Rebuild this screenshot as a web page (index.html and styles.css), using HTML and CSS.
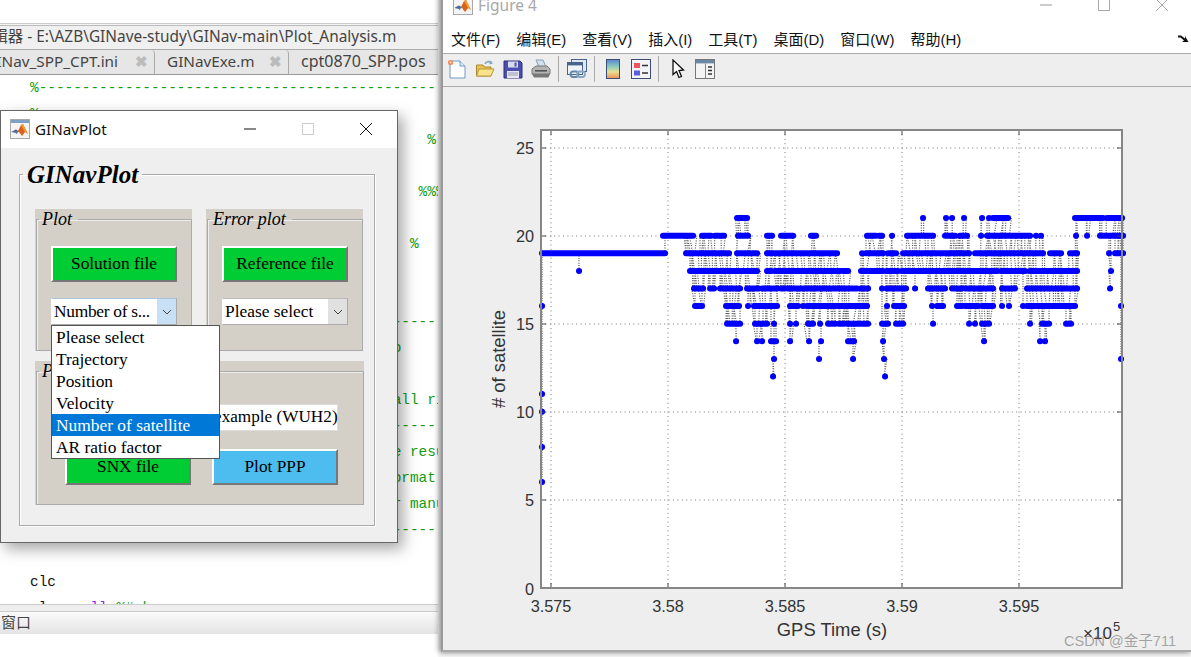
FILE: index.html
```html
<!DOCTYPE html>
<html lang="en">
<head>
  <meta charset="UTF-8">
  <title>GINavPlot</title>
  <link rel="stylesheet" href="styles.css">
</head>
<body>

  <svg class="defs" width="0" height="0">
    <symbol id="matlab" viewBox="0 0 20 20">
      <rect x="0.5" y="0.5" width="19" height="19" fill="#f4f4f4" stroke="#a8a8a8"/>
      <rect x="1" y="1" width="18" height="3" fill="#7f9fc4"/>
      <path d="M1.5 13 L6 10.5 L8 12 L11 6 L13 5 L18 15 L15 13 L12 17 L9 13 L5 13.5 Z" fill="#d9631e"/>
      <path d="M1.5 13 L6 10.5 L8 12 L7 15 L5 13.5 Z" fill="#3b6fb5"/>
      <path d="M11 6 L13 5 L18 15 L15 13 Z" fill="#f0a030"/>
    </symbol>
  </svg>

  <!-- Editor behind everything -->
  <div class="editor">
    <div class="editor-top"></div>
    <div class="editor-title"><span class="editor-path">编辑器 - E:\AZB\GINave-study\GINav-main\Plot_Analysis.m</span></div>
    <div class="tabs">
      <div class="tab tab-first"><span>GINav_SPP_CPT.ini</span><b class="tab-x">✖</b></div>
      <div class="tab"><span>GINavExe.m</span><b class="tab-x">✖</b></div>
      <div class="tab tab-last"><span>cpt0870_SPP.pos</span></div>
    </div>
    <div class="code">
      <div>%---------------------------------------------------------</div>
      <div>%</div>
      <div>                                              %</div>
      <div> </div>
      <div>                                             %%%%</div>
      <div> </div>
      <div>                                            %</div>
      <div> </div>
      <div> </div>
      <div>%---------------------------------------------------------</div>
      <div>                                          o</div>
      <div> </div>
      <div>                                          all rights</div>
      <div>%---------------------------------------------------------</div>
      <div>                                          e results</div>
      <div>                                         format</div>
      <div>                                          r manual</div>
      <div>%---------------------------------------------------------</div>
      <div> </div>
      <div class="code-black">clc</div>
      <div class="code-black">clear <span class="code-purple">all</span> <span class="code-green">%#ok</span></div>
    </div>
    <div class="cmd-gap"></div>
    <div class="cmd-title">窗口</div>
  </div>

  <!-- GINavPlot dialog -->
  <div class="dialog">
    <div class="titlebar">
      <svg class="app-icon"><use href="#matlab"/></svg>
      <span class="titlebar-text">GINavPlot</span>
      <svg class="win-btn" viewBox="0 0 12 12"><path d="M0 6H12" stroke="#111"/></svg>
      <svg class="win-btn" viewBox="0 0 12 12"><rect x="0.5" y="0.5" width="11" height="11" fill="none" stroke="#ccc"/></svg>
      <svg class="win-btn" viewBox="0 0 12 12"><path d="M0 0L12 12M12 0L0 12" stroke="#111"/></svg>
    </div>
    <div class="dialog-body">
      <fieldset class="main-panel">
        <legend>GINavPlot</legend>
        <div class="panel-row">
          <div class="box">
            <fieldset class="sub-panel">
              <legend>Plot</legend>
              <button class="btn btn-green">Solution file</button>
              <div class="select select-active"><span>Number of s...</span><i class="select-arrow"><svg viewBox="0 0 10 6"><path d="M1 1L5 5L9 1" fill="none" stroke="#444"/></svg></i></div>
            </fieldset>
          </div>
          <div class="box">
            <fieldset class="sub-panel">
              <legend>Error plot</legend>
              <button class="btn btn-green">Reference file</button>
              <div class="select"><span>Please select</span><i class="select-arrow"><svg viewBox="0 0 10 6"><path d="M1 1L5 5L9 1" fill="none" stroke="#444"/></svg></i></div>
            </fieldset>
          </div>
        </div>
        <div class="box box-wide">
          <fieldset class="sub-panel ppp-panel">
            <legend>PPP plot</legend>
            <div class="ppp-field">example (WUH2)</div>
            <div class="ppp-buttons">
              <button class="btn btn-green">SNX file</button>
              <button class="btn btn-blue">Plot PPP</button>
            </div>
          </fieldset>
        </div>
      </fieldset>
    </div>
    <ul class="dropdown">
      <li>Please select</li>
      <li>Trajectory</li>
      <li>Position</li>
      <li>Velocity</li>
      <li class="selected">Number of satellite</li>
      <li>AR ratio factor</li>
    </ul>
  </div>

  <!-- Figure window -->
  <div class="figure">
    <div class="fig-title">
      <svg class="fig-icon"><use href="#matlab"/></svg>
      <span class="fig-title-text">Figure 4</span>
      <svg class="win-btn" viewBox="0 0 12 12"><path d="M0 6H12" stroke="#999"/></svg>
      <svg class="win-btn" viewBox="0 0 12 12"><rect x="0.5" y="0.5" width="11" height="11" fill="none" stroke="#aaa"/></svg>
      <svg class="win-btn" viewBox="0 0 12 12"><path d="M0 0L12 12M12 0L0 12" stroke="#aaa"/></svg>
    </div>
    <div class="menu">
      <span>文件(F)</span><span>编辑(E)</span><span>查看(V)</span><span>插入(I)</span><span>工具(T)</span><span>桌面(D)</span><span>窗口(W)</span><span>帮助(H)</span>
      <svg class="menu-dock" viewBox="0 0 11 9"><path d="M0 1.5H3L7 4.5V2L10.5 8H4L6 6.5L2.5 3.5H0Z" fill="#111"/></svg>
    </div>
    <div class="toolbar">
      <!-- new -->
      <svg class="tb-icon" viewBox="0 0 20 20">
        <path d="M3 2H13L18 7V19H3Z" fill="#fff" stroke="#6f9ac4"/>
        <path d="M13 2V7H18" fill="#dcebf7" stroke="#6f9ac4"/>
        <circle cx="3.5" cy="3.5" r="2.6" fill="#f08a5a"/>
        <circle cx="3.5" cy="3.5" r="1" fill="#fde0c0"/>
      </svg>
      <!-- open -->
      <svg class="tb-icon" viewBox="0 0 20 20">
        <path d="M1.5 6H8L9.5 8H16V17H1.5Z" fill="#e8c250" stroke="#a88a30"/>
        <path d="M1.5 17L4 10H19L16 17Z" fill="#f9e28a" stroke="#b89a3a"/>
        <path d="M10 5C11 2.5 14 2 16.5 3.5" fill="none" stroke="#7fa6c8" stroke-width="1.6"/>
        <path d="M15 1.5L18 4.5L14.5 5.5Z" fill="#7fa6c8"/>
      </svg>
      <!-- save -->
      <svg class="tb-icon" viewBox="0 0 20 20">
        <path d="M1 2H17L19 4V19H1Z" fill="#4a4fb0" stroke="#2c2f78"/>
        <rect x="5" y="2.5" width="10" height="6" fill="#d8dcf0"/>
        <rect x="11.5" y="3.5" width="2" height="4" fill="#4a4fb0"/>
        <rect x="4" y="12" width="12" height="7" fill="#e8e8f0"/>
        <path d="M5 14H15M5 16H15" stroke="#9a9ab8"/>
      </svg>
      <!-- print -->
      <svg class="tb-icon" viewBox="0 0 20 20">
        <path d="M5 1H12L15 8H8Z" fill="#cfe0ee" stroke="#8aa0b0"/>
        <path d="M1 10L5 7H16L19 10V15H1Z" fill="#b4b4b4" stroke="#777"/>
        <path d="M1 15H19L17.5 18.5H3Z" fill="#777"/>
        <rect x="4" y="11" width="12" height="1.6" fill="#555"/>
      </svg>
      <span class="tb-sep"></span>
      <!-- link plot -->
      <svg class="tb-icon" viewBox="0 0 20 20">
        <rect x="4.5" y="0.5" width="15" height="12" fill="#dfe8f2" stroke="#46648c"/>
        <rect x="0.5" y="3.5" width="15" height="12" fill="#eef3f8" stroke="#46648c"/>
        <rect x="1" y="4" width="14" height="2.4" fill="#46648c"/>
        <rect x="3.5" y="12.5" width="8" height="5.5" rx="2.7" fill="none" stroke="#5f86ad" stroke-width="1.8"/>
        <rect x="10" y="12.5" width="8" height="5.5" rx="2.7" fill="none" stroke="#8aa8c4" stroke-width="1.8"/>
      </svg>
      <span class="tb-sep"></span>
      <!-- colorbar -->
      <svg class="tb-icon" viewBox="0 0 20 20">
        <defs>
          <linearGradient id="cbar" x1="0" y1="0" x2="0" y2="1">
            <stop offset="0" stop-color="#5a86d0"/>
            <stop offset="0.35" stop-color="#86c8c0"/>
            <stop offset="0.65" stop-color="#e8e090"/>
            <stop offset="1" stop-color="#e8905a"/>
          </linearGradient>
        </defs>
        <rect x="3.5" y="0.5" width="13" height="19" fill="url(#cbar)" stroke="#3c4c74"/>
      </svg>
      <!-- legend -->
      <svg class="tb-icon" viewBox="0 0 20 20">
        <rect x="0.5" y="0.5" width="19" height="19" fill="#f4f4f8" stroke="#3c4c74"/>
        <rect x="3" y="4" width="6" height="5" fill="#ee5560"/>
        <rect x="3" y="11.5" width="6" height="5" fill="#5560e0"/>
        <path d="M11 6.5H17M11 14H17" stroke="#333" stroke-width="1.4"/>
      </svg>
      <span class="tb-sep"></span>
      <!-- pointer -->
      <svg class="tb-icon" viewBox="0 0 20 20">
        <path d="M6 1V15.5L9.5 12.5L12 18.5L14.5 17.5L12 11.5L16.5 11Z" fill="#fff" stroke="#111" stroke-width="1.3"/>
      </svg>
      <!-- dock panel -->
      <svg class="tb-icon" viewBox="0 0 20 20">
        <rect x="0.5" y="0.5" width="19" height="19" fill="#f4f4f4" stroke="#777"/>
        <rect x="1" y="1" width="18" height="3.4" fill="#6b87a4"/>
        <path d="M10.5 4.5V19" stroke="#888"/>
        <path d="M13 8H17M13 11.5H17M13 15H17" stroke="#333" stroke-width="1.6"/>
      </svg>
    </div>
    <svg id="plot" class="plot" viewBox="443 87 748 563">
      <rect x="541" y="130" width="581" height="458" fill="#fff"/>
      <path class="grid" d="M551 130V588M668 130V588M785 130V588M902 130V588M1019 130V588"/>
      <path class="grid" d="M541 148H1122M541 236H1122M541 324H1122M541 412H1122M541 500H1122"/>
      <g id="series"></g>
      <path class="ticks" d="M551 588V583M668 588V583M785 588V583M902 588V583M1019 588V583M551 130V135M668 130V135M785 130V135M902 130V135M1019 130V135"/>
      <path class="ticks" d="M541 148H546M541 236H546M541 324H546M541 412H546M541 500H546M1122 148H1117M1122 236H1117M1122 324H1117M1122 412H1117M1122 500H1117"/>
      <rect class="axes" x="541" y="130" width="581" height="458"/>

      <g class="tick-y">
        <text x="534" y="154">25</text>
        <text x="534" y="242">20</text>
        <text x="534" y="330">15</text>
        <text x="534" y="418">10</text>
        <text x="534" y="506">5</text>
        <text x="534" y="595">0</text>
      </g>
      <g class="tick-x">
        <text x="551" y="612">3.575</text>
        <text x="668" y="612">3.58</text>
        <text x="785" y="612">3.585</text>
        <text x="902" y="612">3.59</text>
        <text x="1019" y="612">3.595</text>
      </g>
      <text class="axis-label" x="832" y="636">GPS Time (s)</text>
      <text class="axis-label" transform="translate(505 359) rotate(-90)"># of satellite</text>
      <text class="exponent" x="1083" y="639">×10</text>
      <text class="exponent-sup" x="1113" y="631">5</text>
    </svg>
  </div>

  <div class="watermark">CSDN @金子711</div>

  <script src="plot.js"></script>
</body>
</html>
```

FILE: styles.css
```css
* {
  box-sizing: border-box;
}
html, body {
  margin: 0;
  padding: 0;
}
body {
  position: relative;
  width: 1191px;
  height: 657px;
  overflow: hidden;
  background-color: #f6f6f6;
  font-family: "Liberation Sans", "Noto Sans CJK SC", sans-serif;
}
.defs {
  position: absolute;
}

/* editor */
.editor {
  width: 438px;
  height: 657px;
  background-color: #fff;
  overflow: hidden;
  display: flex;
  flex-direction: column;
  font-family: "Noto Sans", "Noto Sans CJK SC", sans-serif;
}
.editor-top {
  height: 26px;
  flex: none;
  border-bottom: 1px solid #bbb;
  background: linear-gradient(#fff 23px, #ccc 23px, #ccc 24px, #f4f4f4 24px);
}
.editor-title {
  height: 24px;
  flex: none;
  background-color: #f0f0f0;
  border-bottom: 1px solid #aaa;
  font-size: 15.4px;
  line-height: 22px;
  color: #444;
  white-space: nowrap;
}
.editor-path {
  margin-left: -23px;
}
.tabs {
  height: 25px;
  flex: none;
  display: flex;
  background-color: #e6e6e6;
  border-bottom: 1px solid #999;
  overflow: hidden;
}
.tab {
  width: 134px;
  flex: none;
  display: flex;
  justify-content: space-between;
  align-items: center;
  padding: 0 6px 2px 12px;
  font-size: 15.3px;
  color: #444;
  border-right: 1px solid #aaa;
  border-top-right-radius: 4px;
}
.tab-first {
  width: 156px;
  margin-left: -1px;
  padding-left: 0;
  justify-content: flex-end;
  gap: 17px;
}
.tab-first span {
  flex: none;
}
.tab-last {
  width: 150px;
  border-right: none;
  font-size: 16px;
}
.tab-x {
  color: #bbb;
  font-size: 15px;
  font-weight: bold;
}
.code {
  height: 529px;
  flex: none;
  overflow: hidden;
  padding-left: 30px;
  font-family: "Liberation Mono", monospace;
  font-size: 14.4px;
  line-height: 26px;
  color: #139c13;
}
.code div {
  height: 26px;
  white-space: pre;
}
.code .code-black {
  color: #111;
}
.code-purple {
  color: #a020f0;
}
.code-green {
  color: #139c13;
}
.cmd-gap {
  height: 7px;
  flex: none;
  background-color: #eee;
  border-top: 1px solid #ccc;
}
.cmd-title {
  height: 23px;
  flex: none;
  border-top: 1px solid #ccc;
  background: linear-gradient(#fafafa, #e4e4e4);
  font-size: 15px;
  line-height: 21px;
  color: #444;
  padding-left: 1px;
}

/* dialog */
.dialog {
  position: absolute;
  left: 0;
  top: 110px;
  width: 398px;
  height: 433px;
  border: 1px solid #666;
  background-color: #efefef;
  box-shadow: 5px 6px 14px rgba(0, 0, 0, 0.35);
  font-family: "Liberation Serif", serif;
}
.titlebar {
  height: 37px;
  padding-bottom: 2px;
  background-color: #fff;
  display: flex;
  align-items: center;
  font-family: "Noto Sans", sans-serif;
  font-size: 15.2px;
  color: #111;
}
.app-icon {
  width: 20px;
  height: 20px;
  margin-left: 9px;
  flex: none;
}
.titlebar-text {
  margin-left: 5px;
  width: 209px;
  flex: none;
}
.win-btn {
  width: 12px;
  height: 12px;
  flex: none;
  margin-right: 46px;
}
.win-btn:last-child {
  margin-right: 0;
}
.dialog-body {
  padding: 12px 22px 0 18px;
}
.main-panel {
  height: 366px;
  margin: 0;
  padding: 0 0 0 15px;
  border: 1px solid #aaa;
  box-shadow: inset 1px 1px 0 #fff, 1px 1px 0 #fff;
  display: block;
}
.main-panel > legend {
  margin-left: -12px;
  padding: 0 4px;
  font-size: 25px;
  font-weight: bold;
  font-style: italic;
  line-height: 29px;
  color: #000;
}
.panel-row {
  display: flex;
  gap: 14px;
  margin-top: 20px;
}
.box {
  width: 157px;
  height: 142px;
  background-color: #d4d0c8;
  flex: none;
}
.box-wide {
  width: 329px;
  height: 144px;
  margin-top: 10px;
}
.sub-panel {
  height: 100%;
  width: 156px;
  margin: 0 0 0 1px;
  padding: 17px 0 0 14px;
  border: 1px solid #aaa;
  box-shadow: inset 1px 1px 0 #eee, 1px 1px 0 #eee;
  display: block;
}
.sub-panel legend {
  margin-left: -12px;
  padding: 0 6px 0 3px;
  font-size: 18px;
  font-style: italic;
  line-height: 20px;
  color: #000;
}
.btn {
  display: block;
  width: 126px;
  height: 36px;
  padding: 0;
  border: 2px solid;
  border-color: #fff #777 #777 #fff;
  font-family: "Liberation Serif", serif;
  font-size: 17.3px;
  color: #000;
}
.btn-green {
  background-color: #00cc33;
}
.btn-blue {
  background-color: #4dbcef;
}
.select {
  width: 126px;
  height: 27px;
  margin-top: 16px;
  display: flex;
  justify-content: space-between;
  background-color: #fff;
  border: 1px solid #aaa;
  border-color: #bbb #aaa #aaa #fff;
  font-size: 17.4px;
  line-height: 24px;
  padding-left: 2px;
  color: #000;
}
.select-arrow {
  width: 19px;
  background-color: #e0e0e0;
  display: flex;
  align-items: center;
  justify-content: center;
}
.select-arrow svg {
  width: 10px;
  height: 6px;
}
.select-active {
  border-color: #aac4dc #aaa #aaa #fff;
}
.select-active span {
  letter-spacing: -0.3px;
}
.select-active .select-arrow {
  background-color: #c8e0f5;
}
.ppp-panel {
  width: 328px;
  position: relative;
}
.ppp-field {
  width: 126px;
  height: 27px;
  margin: 6px 0 0 161px;
  padding-left: 1px;
  background-color: #fff;
  border: 1px solid #ddd;
  text-align: center;
  white-space: nowrap;
  font-size: 17.2px;
  line-height: 24px;
  color: #000;
}
.ppp-buttons {
  display: flex;
  gap: 21px;
  margin: 18px 0 0 14px;
}
.dropdown {
  position: absolute;
  left: 50px;
  top: 214px;
  width: 169px;
  height: 134px;
  margin: 0;
  padding: 0;
  list-style: none;
  background-color: #fff;
  border: 1px solid #555;
  font-size: 17.4px;
  line-height: 22px;
  color: #000;
}
.dropdown li {
  height: 22px;
  padding-left: 4px;
  white-space: nowrap;
}
.dropdown .selected {
  background-color: #0078d7;
  color: #fff;
}

/* figure window */
.figure {
  position: absolute;
  left: 441px;
  top: -13px;
  width: 750px;
  height: 665px;
  display: flex;
  flex-direction: column;
  background-color: #eee;
  border-left: 2px solid #999;
  border-bottom: 2px solid #aaa;
  box-shadow: -3px 0 5px rgba(0, 0, 0, 0.3), 0 2px 4px rgba(0, 0, 0, 0.15);
}
.fig-title {
  height: 38px;
  flex: none;
  padding-bottom: 2px;
  background-color: #fff;
  display: flex;
  align-items: center;
}
.fig-icon {
  width: 20px;
  height: 20px;
  margin-left: 10px;
  flex: none;
}
.fig-title-text {
  margin-left: 5px;
  width: 562px;
  flex: none;
  font-family: "Noto Sans", sans-serif;
  font-size: 15.5px;
  color: #a8a8a8;
}
.menu {
  height: 29px;
  flex: none;
  display: flex;
  align-items: center;
  gap: 16px;
  padding: 0 0 2px 8px;
  background-color: #fff;
  border-bottom: 1px solid #aaa;
  font-size: 15px;
  color: #111;
}
.menu-dock {
  position: absolute;
  left: 735px;
  top: 47px;
  width: 11px;
  height: 9px;
}
.toolbar {
  height: 33px;
  flex: none;
  display: flex;
  align-items: center;
  gap: 8px;
  padding: 0 0 2px 4px;
  background-color: #eee;
  border-bottom: 1px solid #aaa;
}
.tb-icon {
  width: 20px;
  height: 20px;
  flex: none;
}
.tb-sep {
  width: 1px;
  height: 26px;
  margin-left: -1px;
  background-color: #aaa;
  flex: none;
}
.plot {
  width: 748px;
  height: 563px;
  flex: none;
  display: block;
}
.grid {
  fill: none;
  stroke: #777;
  stroke-width: 1;
  stroke-dasharray: 1 3.4;
}
.ticks {
  fill: none;
  stroke: #444;
  stroke-width: 1;
}
.axes {
  fill: none;
  stroke: #868686;
  stroke-width: 2;
}
.stems {
  fill: none;
  stroke: #555;
  stroke-width: 1.2;
  stroke-dasharray: 1 1.4;
}
.runs {
  fill: none;
  stroke: #0000ff;
  stroke-width: 6;
  stroke-linecap: round;
}
.tick-y text {
  font-size: 16.3px;
  fill: #333;
  text-anchor: end;
}
.tick-x text {
  font-size: 16.3px;
  fill: #333;
  text-anchor: middle;
}
.axis-label {
  font-size: 18.4px;
  fill: #333;
  text-anchor: middle;
}
.exponent {
  font-size: 17px;
  fill: #333;
}
.exponent-sup {
  font-size: 13px;
  fill: #333;
}
.watermark {
  position: absolute;
  left: 1064px;
  top: 632px;
  font-size: 14.5px;
  line-height: 18px;
  color: rgba(110, 110, 110, 0.6);
  white-space: nowrap;
}
```

FILE: plot.js
```js
// satellite count over time, stored as runs of x pixels per level
var levels = {
  21: [[737, 747], [923, 923], [946, 946], [952, 952], [964, 964], [982, 982], [989, 989], [993, 1008], [1075, 1103], [1107, 1122]],
  20: [[663, 693], [702, 711], [715, 719], [721, 724], [738, 748], [767, 772], [781, 793], [811, 816], [867, 876], [879, 882], [892, 892], [907, 933], [945, 955], [960, 967], [981, 981], [987, 1030], [1036, 1036], [1041, 1041], [1076, 1076], [1087, 1087], [1100, 1123]],
  19: [[542, 665], [686, 698], [700, 729], [737, 750], [752, 757], [767, 772], [775, 837], [862, 862], [866, 883], [888, 896], [903, 957], [960, 969], [975, 1043], [1050, 1061], [1070, 1077], [1109, 1109], [1115, 1123]],
  18: [[579, 579], [690, 757], [767, 771], [775, 840], [843, 848], [861, 883], [887, 898], [902, 958], [960, 995], [997, 997], [1001, 1025], [1030, 1077], [1111, 1111]],
  17: [[694, 703], [710, 714], [720, 740], [747, 758], [762, 777], [781, 785], [788, 857], [861, 868], [882, 882], [887, 892], [894, 906], [915, 915], [928, 945], [952, 962], [966, 993], [1002, 1015], [1027, 1077], [1110, 1110]],
  16: [[542, 542], [695, 702], [726, 739], [748, 748], [754, 777], [790, 798], [803, 803], [807, 813], [815, 867], [887, 887], [894, 904], [932, 932], [937, 943], [957, 962], [965, 978], [982, 993], [1002, 1002], [1009, 1009], [1023, 1023], [1027, 1075], [1121, 1121]],
  15: [[727, 740], [755, 767], [774, 774], [790, 790], [796, 796], [808, 813], [820, 820], [828, 835], [839, 844], [847, 868], [882, 888], [896, 903], [933, 933], [969, 969], [975, 975], [982, 989], [1030, 1030], [1042, 1049], [1066, 1071]],
  14: [[736, 736], [757, 757], [762, 762], [771, 776], [790, 790], [809, 809], [821, 821], [848, 854], [883, 883], [984, 984], [1040, 1040], [1045, 1045]],
  13: [[774, 774], [819, 819], [853, 853], [884, 884], [1121, 1121]],
  12: [[773, 773], [885, 885]],
  11: [[542, 542]],
  10: [[542, 542]],
  8: [[542, 542]],
  6: [[542, 542]]
};

function levelY(n) {
  return 587.7 - n * 17.6;
}

function covered(n, x) {
  var runs = levels[n] || [];
  for (var i = 0; i < runs.length; i++) {
    if (x >= runs[i][0] - 2 && x <= runs[i][1] + 2) return true;
  }
  return false;
}

// fixed seed so the hatching comes out the same each load
var seed = 7;
function rand() {
  seed = (seed * 1103515245 + 12345) % 2147483648;
  return seed / 2147483648;
}

var stems = '';
var dots = '';

Object.keys(levels).forEach(function (key) {
  var n = Number(key);
  levels[n].forEach(function (run) {
    dots += 'M' + run[0] + ' ' + levelY(n) + 'H' + (run[1] + 0.1);

    // each end of a run joins the nearest level above it
    [run[0], run[1]].forEach(function (x) {
      for (var up = n + 1; up <= 21; up++) {
        if (covered(up, x)) {
          stems += 'M' + x + ' ' + levelY(n) + 'V' + levelY(up);
          break;
        }
      }
    });
  });

  // samples hop between neighbouring levels where both have runs
  if (n < 21) {
    for (var x = 686; x < 1123; x += 2.2) {
      if (covered(n, x) && covered(n + 1, x) && rand() < 0.75) {
        var drift = Math.round((rand() - 0.5) * 6);
        stems += 'M' + x.toFixed(1) + ' ' + levelY(n) + 'L' + (x + drift).toFixed(1) + ' ' + levelY(n + 1);
      }
    }
  }
});

document.getElementById('series').innerHTML =
  '<path class="stems" d="' + stems + '"/>' +
  '<path class="runs" d="' + dots + '"/>';
```
